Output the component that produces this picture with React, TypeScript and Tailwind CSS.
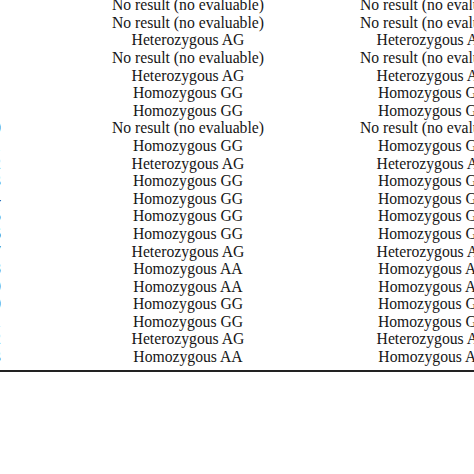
const rows: [string, string][] = [
  ["3", "No result (no evaluable)"],
  ["4", "No result (no evaluable)"],
  ["5", "Heterozygous AG"],
  ["6", "No result (no evaluable)"],
  ["7", "Heterozygous AG"],
  ["8", "Homozygous GG"],
  ["9", "Homozygous GG"],
  ["10", "No result (no evaluable)"],
  ["11", "Homozygous GG"],
  ["12", "Heterozygous AG"],
  ["13", "Homozygous GG"],
  ["14", "Homozygous GG"],
  ["15", "Homozygous GG"],
  ["16", "Homozygous GG"],
  ["17", "Heterozygous AG"],
  ["18", "Homozygous AA"],
  ["19", "Homozygous AA"],
  ["20", "Homozygous GG"],
  ["21", "Homozygous GG"],
  ["22", "Heterozygous AG"],
  ["23", "Homozygous AA"],
];

export default function App() {
  return (
    <div className="w-[474px] h-[474px] overflow-hidden bg-white text-[#161616]" style={{ fontFamily: '"Liberation Serif", "Times New Roman", serif' }}>
      <div className="-ml-[27px] -mt-[3.8px] w-[533px] text-[15.7px] leading-[17.6px]">
        {rows.map(([id, genotype], i) => (
          <div key={i} className="grid grid-cols-[40px_347px_146px] text-center whitespace-nowrap">
            <span>{id}</span>
            <span className="pl-[3px]">{genotype}</span>
            <span>{genotype}</span>
          </div>
        ))}
        <div className="mt-[4px] border-t-2 border-[#222]" />
      </div>
    </div>
  );
}
